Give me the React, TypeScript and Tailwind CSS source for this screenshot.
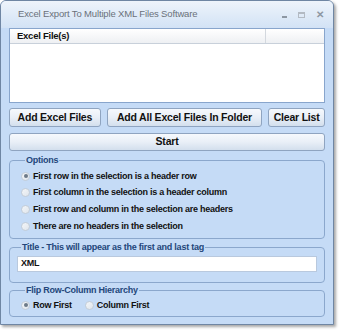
import React from "react";

function Radio({ checked, label }: { checked?: boolean; label: string }) {
  return (
    <label className="flex items-center gap-[3px] h-[16.6px]">
      <span className="w-[9px] h-[9px] rounded-full border border-[#c3cdd8] bg-gradient-to-br from-[#f4f6f8] to-[#dfe5ec] flex items-center justify-center shrink-0">
        {checked && <span className="w-[4px] h-[4px] rounded-full bg-[#6d7a88]" />}
      </span>
      <span className="text-[9px] font-bold tracking-[-0.25px] text-[#111] leading-none">{label}</span>
    </label>
  );
}

function Group({
  title,
  className,
  children,
}: {
  title: string;
  className?: string;
  children: React.ReactNode;
}) {
  return (
    <fieldset className={`border border-[#8ba7cc] rounded-[4px] ${className ?? ""}`}>
      <legend className="ml-[4px] px-[1px] text-[9px] leading-[10px] font-bold tracking-[-0.25px] text-[#23467a]">
        {title}
      </legend>
      {children}
    </fieldset>
  );
}

function Btn({ children, className }: { children: React.ReactNode; className?: string }) {
  return (
    <button
      type="button"
      className={`rounded-[3px] border border-[#8fa4c0] bg-gradient-to-b from-[#f6f9fd] via-[#e9eff7] to-[#d3dfed] text-[10.5px] font-bold tracking-[-0.2px] text-[#111] ${className ?? ""}`}
    >
      {children}
    </button>
  );
}

export default function App() {
  return (
    <div className="w-[340px] h-[330px] bg-white font-['Liberation_Sans',Arial,sans-serif]">
      <div className="w-[334px] h-[325px] rounded-t-[6px] border border-[#6f86a3] bg-[#c5dbf6] shadow-[2px_2px_3px_rgba(0,0,0,0.35)] flex flex-col overflow-hidden">
        <div className="h-[27px] shrink-0 flex items-center pl-[17px] pr-[9px] bg-gradient-to-b from-[#eef4fb] to-[#d2e2f5]">
          <span className="text-[9.5px] tracking-[-0.15px] text-[#6a717a]">
            Excel Export To Multiple XML Files Software
          </span>
          <div className="ml-auto flex items-center gap-[11px] text-[#8d97a3] text-[10px]">
            <span className="w-[5px] h-[2px] bg-[#8d97a3] mt-[4px]" />
            <span className="w-[7px] h-[6px] border border-[#b3bac3] border-t-2" />
            <span className="font-bold text-[10px] leading-none">✕</span>
          </div>
        </div>

        <div className="px-[8px] flex flex-col">
          <div className="h-[75px] border border-[#88a5cc] bg-white flex flex-col">
            <div className="h-[15px] flex bg-gradient-to-b from-white to-[#eef0f3] border-b border-[#c8d0da]">
              <div className="w-[256px] border-r border-[#d3d8de] pl-[7px] flex items-center text-[9.5px] font-bold tracking-[-0.25px] text-[#111]">
                Excel File(s)
              </div>
            </div>
          </div>

          <div className="mt-[5px] flex gap-[6px]">
            <Btn className="w-[92px] h-[19px]">Add Excel Files</Btn>
            <Btn className="w-[156px] h-[19px]">Add All Excel Files In Folder</Btn>
            <Btn className="w-[57px] h-[19px]">Clear List</Btn>
          </div>

          <Btn className="mt-[6px] w-full h-[18px]">Start</Btn>

          <Group title="Options" className="mt-[4px] h-[84px] px-[11px]">
            <div className="flex flex-col pt-[3px]">
              <Radio checked label="First row in the selection is a header row" />
              <Radio label="First column in the selection is a header column" />
              <Radio label="First row and column in the selection are headers" />
              <Radio label="There are no headers in the selection" />
            </div>
          </Group>

          <Group title="Title - This will appear as the first and last tag" className="mt-[3px] h-[41px] px-[7px]">
            <div className="mt-[4px] h-[16px] border border-[#b9c9de] bg-white flex items-center pl-[3px] text-[9px] font-bold tracking-[-0.3px] text-[#111]">
              XML
            </div>
          </Group>

          <Group title="Flip Row-Column Hierarchy" className="mt-[2px] h-[32px] px-[11px]">
            <div className="flex items-center gap-[13px] pt-[2px]">
              <Radio checked label="Row First" />
              <Radio label="Column First" />
            </div>
          </Group>
        </div>
      </div>
    </div>
  );
}
